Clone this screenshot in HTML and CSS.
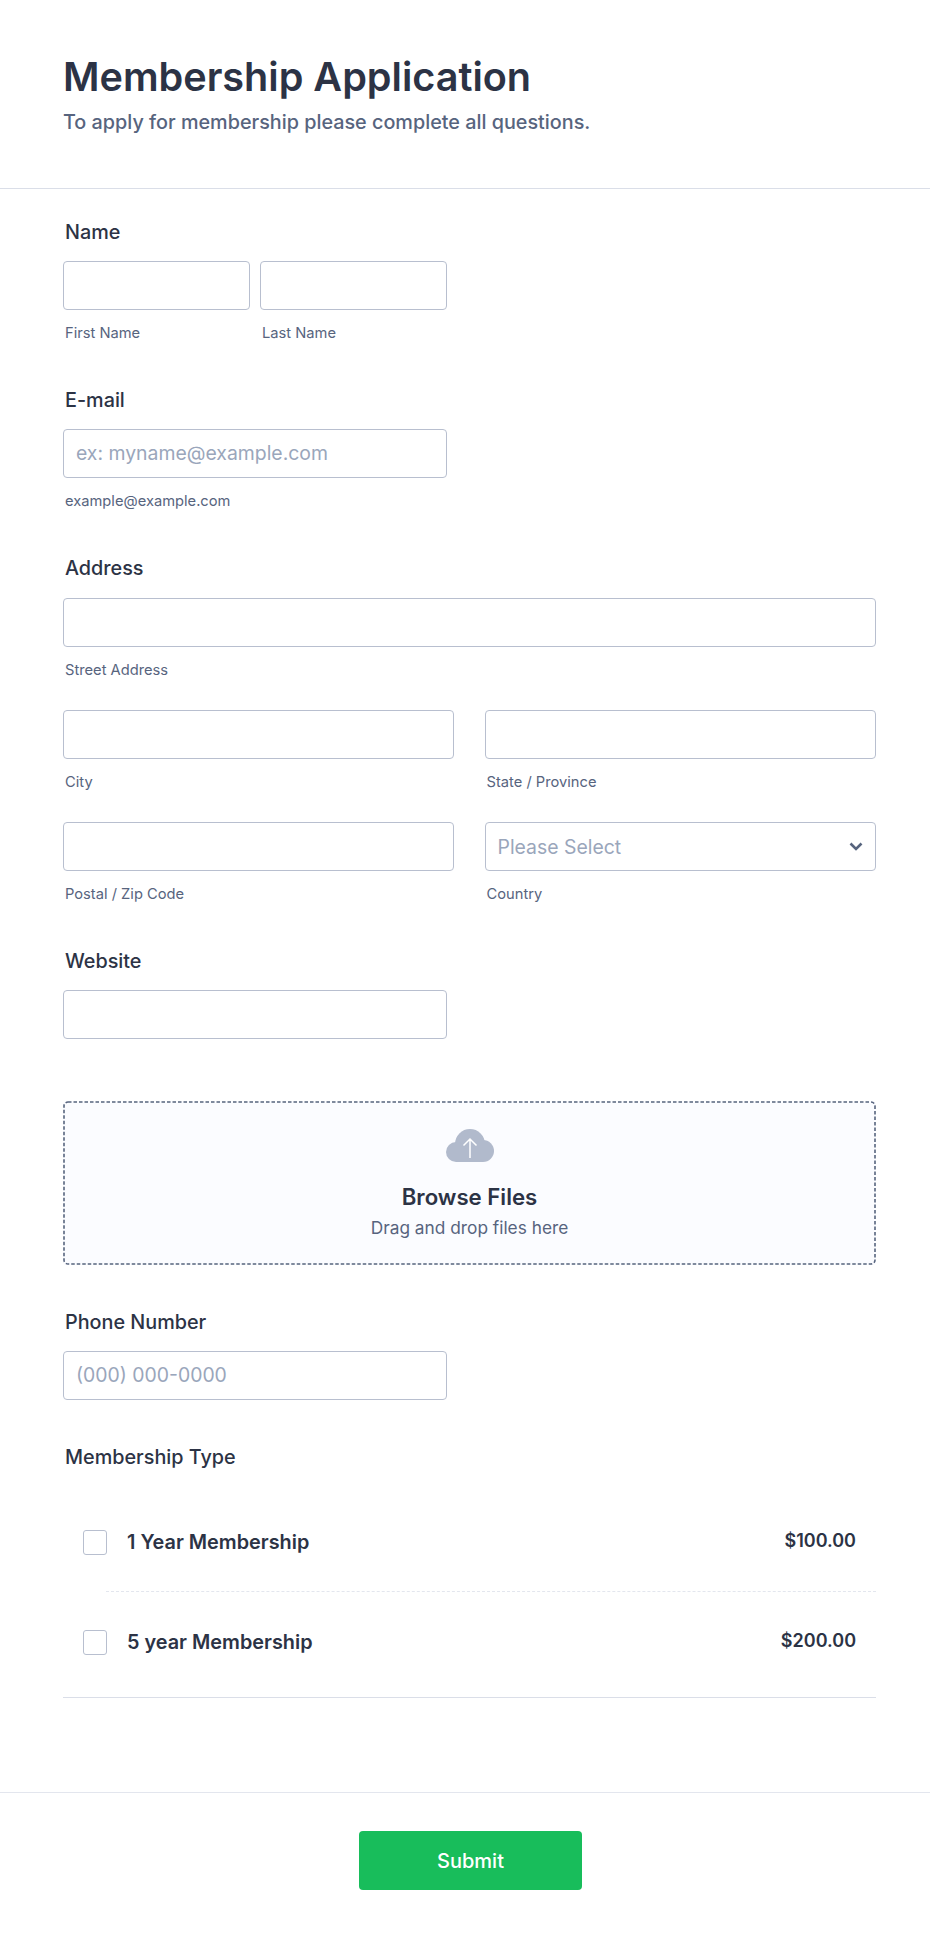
FILE: index.html
```html
<!DOCTYPE html>
<html lang="en">
<head>
    <meta charset="UTF-8">
    <meta name="viewport" content="width=device-width, initial-scale=1.0">
    <title>Membership Application</title>
    <link rel="stylesheet" href="styles.css">
</head>
<body>
    <header class="form-header">
        <h1>Membership Application</h1>
        <p>To apply for membership please complete all questions.</p>
    </header>

    <form class="form-body">
        <div class="field">
            <label class="field-label">Name</label>
            <div class="half name-row">
                <div>
                    <input class="text-input" type="text">
                    <div class="sub-label">First Name</div>
                </div>
                <div>
                    <input class="text-input" type="text">
                    <div class="sub-label">Last Name</div>
                </div>
            </div>
        </div>

        <div class="field email-field">
            <label class="field-label">E-mail</label>
            <div class="half">
                <input class="text-input" type="text" placeholder="ex: myname@example.com">
                <div class="sub-label">example@example.com</div>
            </div>
        </div>

        <div class="field">
            <label class="field-label">Address</label>
            <div class="address">
                <div class="wide">
                    <input class="text-input" type="text">
                    <div class="sub-label">Street Address</div>
                </div>
                <div>
                    <input class="text-input" type="text">
                    <div class="sub-label">City</div>
                </div>
                <div>
                    <input class="text-input" type="text">
                    <div class="sub-label">State / Province</div>
                </div>
                <div>
                    <input class="text-input" type="text">
                    <div class="sub-label">Postal / Zip Code</div>
                </div>
                <div>
                    <div class="select-box">
                        <select class="text-input">
                            <option>Please Select</option>
                        </select>
                        <svg class="chevron" width="14" height="9" viewBox="0 0 14 9"><path d="M1.500 1.500 7 7l5.500-5.500" fill="none" stroke="#57647e" stroke-width="2.600"/></svg>
                    </div>
                    <div class="sub-label">Country</div>
                </div>
            </div>
        </div>

        <div class="field">
            <label class="field-label">Website</label>
            <div class="half">
                <input class="text-input" type="text">
            </div>
        </div>

        <div class="upload">
            <svg class="upload-border"><rect x="1" y="1" rx="4" ry="4"/></svg>
            <svg class="cloud" width="48" height="33" viewBox="0 0 48 33">
                <g fill="#b1bacc">
                    <circle cx="24" cy="15" r="15"/>
                    <circle cx="10" cy="23" r="10"/>
                    <circle cx="37" cy="22" r="11"/>
                    <rect x="10" y="20" width="27" height="13"/>
                </g>
                <path d="M24 29V10M17.500 16.500 24 10l6.500 6.500" fill="none" stroke="#fff" stroke-width="1.500"/>
            </svg>
            <div class="upload-title">Browse Files</div>
            <div class="upload-hint">Drag and drop files here</div>
        </div>

        <div class="field">
            <label class="field-label">Phone Number</label>
            <div class="half">
                <input class="text-input" type="text" placeholder="(000) 000-0000">
            </div>
        </div>

        <div class="field products-field">
            <label class="field-label">Membership Type</label>
            <div class="products">
                <div class="product">
                    <span class="check"></span>
                    <span class="product-name">1 Year Membership</span>
                    <span class="product-price">$100.00</span>
                </div>
                <div class="product">
                    <span class="check"></span>
                    <span class="product-name">5 year Membership</span>
                    <span class="product-price">$200.00</span>
                </div>
            </div>
        </div>
    </form>

    <footer class="form-footer">
        <button class="submit" type="button">Submit</button>
    </footer>
</body>
</html>
```

FILE: styles.css
```css
* {
    box-sizing: border-box;
}

body {
    margin: 0;
    background: #fff;
    font-family: Inter, "Liberation Sans", sans-serif;
    color: #2c3345;
}

/* Header */
.form-header {
    height: 189px;
    padding: 51px 63px 0;
    border-bottom: 1px solid #dadee8;
}

.form-header h1 {
    margin: 0;
    font-size: 39.600px;
    line-height: 52px;
    font-weight: 600;
}

.form-header p {
    margin: 6px 0 0;
    font-size: 19.800px;
    line-height: 26px;
    font-weight: 500;
    color: #57647e;
}

/* Fields */
.form-body {
    padding: 31px 54px 0 63px;
}

.field {
    margin-bottom: 44.500px;
}

.email-field {
    margin-bottom: 45.500px;
}

.field-label {
    display: block;
    margin: 0 0 17px 2px;
    font-size: 19.800px;
    line-height: 24px;
    font-weight: 500;
}

.half {
    width: 384px;
}

.name-row {
    display: grid;
    grid-template-columns: 187px 187px;
    column-gap: 10px;
}

.address {
    display: grid;
    grid-template-columns: 391px 391px;
    column-gap: 30.500px;
    row-gap: 30px;
    margin-top: 18px;
}

.address .wide {
    grid-column: 1 / 3;
}

.text-input {
    display: block;
    width: 100%;
    height: 49px;
    padding: 0 12px;
    border: 1px solid #b8bfcf;
    border-radius: 4px;
    background: #fff;
    font-family: inherit;
    font-size: 19.400px;
    font-weight: 400;
    color: #2c3345;
    outline: none;
    appearance: none;
}

.text-input::placeholder {
    color: #9aa6bb;
}

select.text-input {
    color: #9aa6bb;
}

.sub-label {
    margin: 13px 0 0 2px;
    font-size: 14.700px;
    line-height: 20px;
    color: #57647e;
}

.select-box {
    position: relative;
}

.chevron {
    position: absolute;
    right: 13px;
    top: 20px;
}

/* Upload box */
.upload {
    position: relative;
    display: flex;
    flex-direction: column;
    align-items: center;
    height: 164px;
    margin: 62px 0 45px;
    padding-top: 28px;
    border-radius: 4px;
    background: #fbfcff;
}

.upload-border {
    position: absolute;
    inset: 0;
    width: 100%;
    height: 100%;
}

.upload-border rect {
    width: calc(100% - 2px);
    height: calc(100% - 2px);
    fill: none;
    stroke: #57647e;
    stroke-width: 1.600;
    stroke-dasharray: 3.500 2;
}

.upload-title {
    margin-top: 21px;
    font-size: 22.200px;
    line-height: 28px;
    font-weight: 600;
}

.upload-hint {
    margin-top: 5px;
    font-size: 17.300px;
    line-height: 24px;
    color: #57647e;
}

/* Membership list */
.products-field {
    margin-bottom: 0;
    padding-top: 1px;
}

.products {
    margin-top: 23px;
    padding-bottom: 5px;
    border-bottom: 1px solid #dadee8;
}

.product {
    position: relative;
    display: flex;
    align-items: center;
    height: 100px;
    padding: 0 20px;
    font-weight: 600;
}

.product:first-child::after {
    content: "";
    position: absolute;
    left: 43px;
    right: 0;
    bottom: 0;
    border-bottom: 1px dashed #e3e6ee;
}

.check {
    width: 24px;
    height: 25px;
    margin-right: 20px;
    border: 1px solid #b8bfcf;
    border-radius: 3px;
}

.product-name {
    flex: 1;
    font-size: 19.850px;
}

.product-price {
    font-size: 18px;
    margin-top: -4px;
}

/* Footer */
.form-footer {
    display: flex;
    justify-content: center;
    height: 148px;
    margin-top: 94px;
    padding: 38px 0 0 11px;
    border-top: 1px solid #e3e6ee;
}

.submit {
    width: 223px;
    height: 59px;
    padding: 0;
    border: 0;
    border-radius: 4px;
    background: #18bd5b;
    color: #fff;
    font-family: inherit;
    font-size: 20px;
    font-weight: 500;
}
```
